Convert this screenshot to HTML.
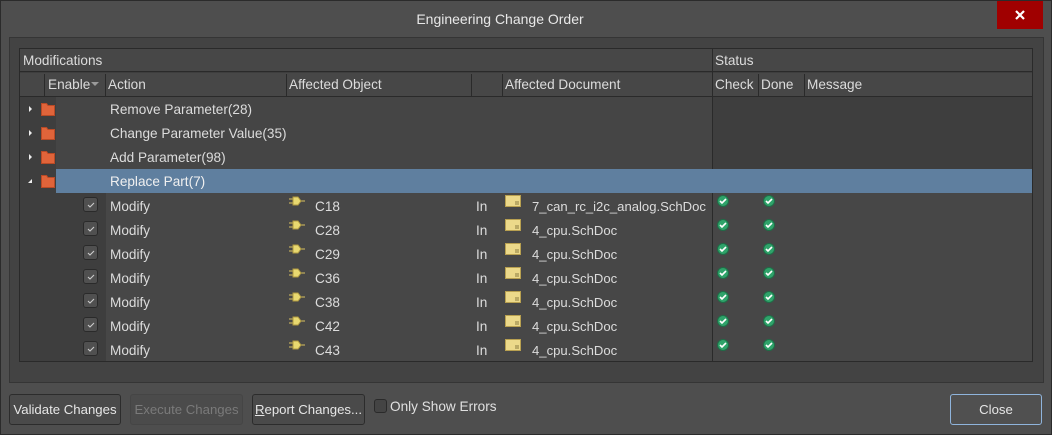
<!DOCTYPE html>
<html><head><meta charset="utf-8">
<style>
*{box-sizing:border-box;margin:0;padding:0}
body{width:1052px;height:435px;background:#4e4e4e;font-family:"Liberation Sans",sans-serif;font-size:13.6px;color:#dcdcdc;position:relative;overflow:hidden}
.a{position:absolute}
.win{left:0;top:0;width:1052px;height:435px;border:1px solid #2b2b2b}
.t{position:absolute;white-space:nowrap;line-height:16px}
.sep{position:absolute;width:1px;background:#2a2a2a}
.btn{position:absolute;height:31px;border:1px solid #2c2c2c;border-radius:3px;background:#4a4a4a;text-align:center;line-height:29px;color:#e6e6e6;font-size:13.2px}
.cb{position:absolute;width:15px;height:15px;border:1px solid #2a2a2a;border-radius:3px;background:#505050}
.chk{position:absolute;width:12px;height:12px;border-radius:50%;background:#2fa36a;border:1px solid #1f6d47}
</style></head><body>
<div class="a win"></div>
<div class="t" style="left:0;width:1000px;text-align:center;top:11px;font-size:14px;color:#e8e8e8">Engineering Change Order</div>
<div class="a" style="left:997px;top:1px;width:46px;height:28px;background:#a00000"></div>
<svg class="a" style="left:1013px;top:8px" width="14" height="14"><path d="M3 3L11 11M11 3L3 11" stroke="#fff" stroke-width="2.2"/></svg>

<div class="a" style="left:9px;top:37px;width:1035px;height:346px;border:1px solid #353535;background:#434343"></div>
<div class="a" style="left:19px;top:48px;width:1014px;height:314px;border:1px solid #2a2a2a;background:#3e3e3e"></div>
<div class="a" style="left:20px;top:49px;width:1012px;height:23px;background:#474747;border-bottom:1px solid #2a2a2a"></div>
<div class="a" style="left:20px;top:73px;width:1012px;height:24px;background:#474747;border-bottom:1px solid #2a2a2a"></div>
<div class="t" style="left:23px;top:53px">Modifications</div>
<div class="t" style="left:715px;top:53px">Status</div>
<div class="sep" style="left:712px;top:49px;height:312px"></div>
<div class="sep" style="left:44px;top:74px;height:22px"></div>
<div class="sep" style="left:105px;top:74px;height:22px"></div>
<div class="sep" style="left:286px;top:74px;height:22px"></div>
<div class="sep" style="left:471px;top:74px;height:22px"></div>
<div class="sep" style="left:502px;top:74px;height:22px"></div>
<div class="sep" style="left:758px;top:74px;height:22px"></div>
<div class="sep" style="left:804px;top:74px;height:22px"></div>
<div class="t" style="left:48px;top:77px">Enable</div>
<svg class="a" style="left:91px;top:82px" width="8" height="5"><path d="M0 0H8L4 4Z" fill="#9a9a9a"/></svg>
<div class="t" style="left:108px;top:77px">Action</div>
<div class="t" style="left:289px;top:77px">Affected Object</div>
<div class="t" style="left:505px;top:77px">Affected Document</div>
<div class="t" style="left:715px;top:77px">Check</div>
<div class="t" style="left:761px;top:77px">Done</div>
<div class="t" style="left:807px;top:77px">Message</div>

<div class="a" style="left:56px;top:97px;width:656px;height:72px;background:#454545"></div>
<div class="a" style="left:56px;top:169px;width:976px;height:24px;background:#5f7f9f"></div>
<div class="a" style="left:106px;top:193px;width:926px;height:168px;background:#474747"></div>
<div class="sep" style="left:712px;top:193px;height:168px"></div>

<svg class="a" style="left:26px;top:100px" width="30" height="96">
<path d="M3 6L6 9L3 12Z" fill="#eee"/><path d="M3 30L6 33L3 36Z" fill="#eee"/><path d="M3 54L6 57L3 60Z" fill="#eee"/><path d="M2 83L6 83L6 79Z" fill="#eee"/>
<g fill="#e0643a" stroke="#b84a26" stroke-width="1">
<path d="M15.5 3.5h5l1.5 2h6.5v10h-13z"/><path d="M15.5 27.5h5l1.5 2h6.5v10h-13z"/><path d="M15.5 51.5h5l1.5 2h6.5v10h-13z"/><path d="M15.5 75.5h5l1.5 2h6.5v10h-13z"/></g></svg>
<div class="t" style="left:110px;top:102px">Remove Parameter(28)</div>
<div class="t" style="left:110px;top:126px">Change Parameter Value(35)</div>
<div class="t" style="left:110px;top:150px">Add Parameter(98)</div>
<div class="t" style="left:110px;top:174px;color:#f0f0f0">Replace Part(7)</div>

<div id="rows"></div>
<script>
var items=[["C18","7_can_rc_i2c_analog.SchDoc"],["C28","4_cpu.SchDoc"],["C29","4_cpu.SchDoc"],["C36","4_cpu.SchDoc"],["C38","4_cpu.SchDoc"],["C42","4_cpu.SchDoc"],["C43","4_cpu.SchDoc"]];
var h="";
items.forEach(function(it,i){var y=193+i*24;
h+='<div class="cb" style="left:83px;top:'+(y+4)+'px"></div>';
h+='<svg class="a" style="left:86px;top:'+(y+7)+'px" width="10" height="10"><path d="M2 5L4 7L8 3" stroke="#ccc" stroke-width="1.1" fill="none"/></svg>';
h+='<div class="t" style="left:110px;top:'+(y+6)+'px">Modify</div>';
h+='<svg class="a" style="left:289px;top:'+(y+3)+'px" width="16" height="10"><path d="M0 3H4M0 7H4M12 5H16" stroke="#d8c060" stroke-width="1"/><path d="M4 1H9L12 5L9 9H4Z" fill="#e8d870" stroke="#b09a40"/></svg>';
h+='<div class="t" style="left:315px;top:'+(y+6)+'px">'+it[0]+'</div>';
h+='<div class="t" style="left:476px;top:'+(y+6)+'px">In</div>';
h+='<svg class="a" style="left:505px;top:'+(y+2)+'px" width="16" height="12"><rect x="0.5" y="0.5" width="15" height="11" fill="#ecd98a" stroke="#b8a050"/><path d="M10 7H14M10 9H14" stroke="#8a7a40"/></svg>';
h+='<div class="t" style="left:532px;top:'+(y+6)+'px;font-size:13.1px">'+it[1]+'</div>';
[717,763].forEach(function(x){h+='<div class="chk" style="left:'+x+'px;top:'+(y+2)+'px"></div><svg class="a" style="left:'+x+'px;top:'+(y+2)+'px" width="12" height="12"><path d="M3 6L5 8L9 4" stroke="#fff" stroke-width="1.6" fill="none"/></svg>';});
});
document.getElementById("rows").innerHTML=h;
</script>

<div class="btn" style="left:9px;top:394px;width:112px">Validate Changes</div>
<div class="btn" style="left:130px;top:394px;width:113px;color:#7a7a7a;border-color:#454545;background:#4b4b4b">Execute Changes</div>
<div class="btn" style="left:252px;top:394px;width:113px"><u>R</u>eport Changes...</div>
<div class="a" style="left:374px;top:399px;width:13px;height:14px;border:1px solid #2a2a2a;border-radius:3px;background:#444"></div>
<div class="t" style="left:390px;top:399px;color:#e0e0e0">Only Show Errors</div>
<div class="btn" style="left:950px;top:394px;width:92px;border-color:#8fb4dc;background:#505050">Close</div>
</body></html>
